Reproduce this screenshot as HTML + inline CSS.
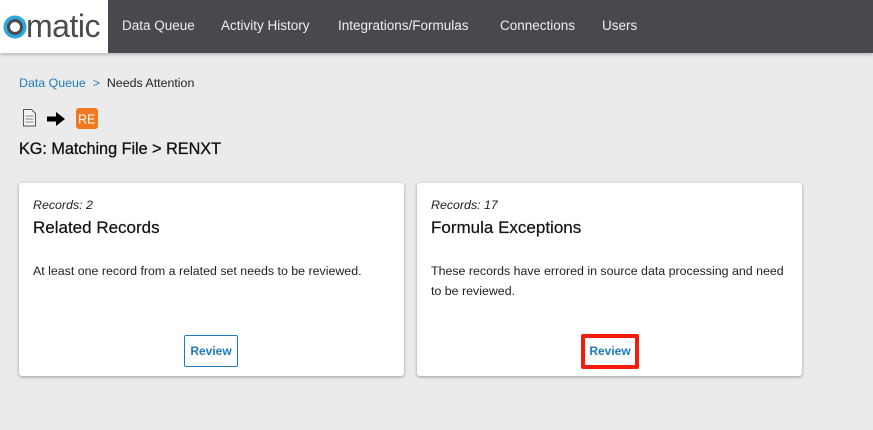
<!DOCTYPE html>
<html><head><style>
*{box-sizing:border-box;margin:0;padding:0}
body{width:873px;height:430px;background:#ebebeb;font-family:"Liberation Sans",sans-serif;position:relative;overflow:hidden}
.hdr{position:absolute;left:0;top:0;width:873px;height:53px;background:#48494e;box-shadow:0 2px 3px rgba(0,0,0,.2)}
.logo{position:absolute;left:0;top:0;width:108px;height:53px;background:#fff;overflow:hidden}
.logo span{position:absolute;left:26px;top:8px;font-size:32px;color:#4a4b50;letter-spacing:-0.5px}
.nav{position:absolute;top:18px;color:#eee;font-size:13.5px}
.bc{position:absolute;left:19px;top:76px;font-size:12.4px;color:#222}
.bc a{color:#1f7bc0}
.ttl{position:absolute;left:19px;top:140px;font-size:16.2px;color:#111;-webkit-text-stroke:0.3px #111}
.card{position:absolute;top:183px;width:385px;height:193px;background:#fff;border-radius:3px;box-shadow:0 1px 3px rgba(0,0,0,.35)}
.rec{position:absolute;left:14px;top:15px;font-style:italic;font-size:12.4px;color:#222}
.h{position:absolute;left:14px;top:35px;font-size:17px;color:#111;-webkit-text-stroke:0.2px #111}
.d{position:absolute;left:14px;top:78px;font-size:12.4px;line-height:20px;color:#222;width:364px}
.btn{position:absolute;top:152px;width:54px;height:32px;border:1px solid #1f7bc0;border-radius:2px;color:#1f7bc0;font-weight:bold;font-size:12px;text-align:center;line-height:30px}
</style></head><body>
<div class="hdr"></div>
<div class="logo">
<svg style="position:absolute;left:3px;top:15px" width="24" height="24"><circle cx="12" cy="12" r="9.5" fill="none" stroke="#2fa6dc" stroke-width="4"/><circle cx="12" cy="12" r="6.5" fill="none" stroke="#4a4b50" stroke-width="3"/></svg>
<span>matic</span></div>
<div class="nav" style="left:122px">Data Queue</div>
<div class="nav" style="left:221px">Activity History</div>
<div class="nav" style="left:338px">Integrations/Formulas</div>
<div class="nav" style="left:500px">Connections</div>
<div class="nav" style="left:602px">Users</div>
<div class="bc"><a>Data Queue</a> &nbsp;<span style="color:#1f7bc0">&gt;</span>&nbsp; Needs Attention</div>
<svg style="position:absolute;left:22px;top:107px" width="80" height="24">
<path d="M1.5 2.5h8l4 4v12.5h-12z" fill="#f4f4f4" stroke="#555"/><path d="M3.5 9h8M3.5 12h8M3.5 15h8" stroke="#888"/>
<path d="M25 12h12" stroke="#000" stroke-width="5"/><path d="M34 5l9 7-9 7z" fill="#000"/>
<rect x="54" y="1" width="22" height="21" rx="3" fill="#f07a22"/>
<text x="56" y="16.5" font-family="Liberation Sans" font-size="12.5" fill="#fff">RE</text>
</svg>
<div class="ttl">KG: Matching File &gt; RENXT</div>
<div class="card" style="left:19px">
<div class="rec">Records: 2</div><div class="h">Related Records</div>
<div class="d">At least one record from a related set needs to be reviewed.</div>
<div class="btn" style="left:165px">Review</div></div>
<div class="card" style="left:417px">
<div class="rec">Records: 17</div><div class="h">Formula Exceptions</div>
<div class="d">These records have errored in source data processing and need to be reviewed.</div>
<div class="btn" style="left:164px;top:151px;width:58px;height:35px;border:4px solid #f51c0b;line-height:27px">Review</div></div>
</body></html>
